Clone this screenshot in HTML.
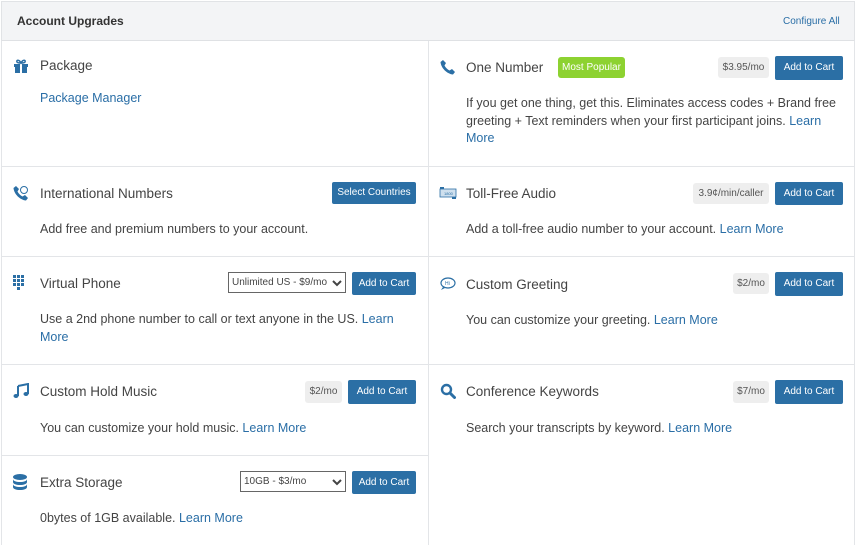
<!DOCTYPE html>
<html><head><meta charset="utf-8"><style>
*{margin:0;padding:0;box-sizing:border-box}
body{width:856px;height:545px;background:#fff;font-family:"Liberation Sans",sans-serif;color:#444;position:relative;overflow:hidden}
.a{position:absolute;white-space:nowrap}
.hd{position:absolute;left:1px;top:1px;width:854px;height:40px;background:#f3f4f6;border:1px solid #e1e3e6;border-bottom:1px solid #dfe1e4}
.ln{position:absolute;background:#e3e5e8}
.t{font-size:13.5px;color:#444;line-height:16px}
.d{font-size:12.5px;line-height:17.5px;color:#444;white-space:normal}
.l{color:#2a6ea6}
.btn{position:absolute;background:#2b6fa5;color:#fff;font-size:10px;border-radius:2px;text-align:center;white-space:nowrap}
.pr{position:absolute;background:#eee;color:#555;font-size:10px;border-radius:3px;text-align:center;white-space:nowrap}
.sel{position:absolute;border:1px solid #666;font-size:10px;line-height:19px;color:#444;padding-left:3px;background:#fff;white-space:nowrap}
.sel svg{position:absolute;right:3px;top:6px}
</style></head><body>
<div class="hd"></div>
<div class="a" style="left:17px;top:14px;font-size:12px;font-weight:bold;color:#333">Account Upgrades</div>
<div class="a l" style="left:783px;top:16px;font-size:10px">Configure All</div>
<div class="ln" style="left:1px;top:41px;width:1px;height:504px"></div>
<div class="ln" style="left:854px;top:41px;width:1px;height:504px"></div>
<div class="ln" style="left:428px;top:41px;width:1px;height:504px"></div>
<div class="ln" style="left:1px;top:166px;width:854px;height:1px"></div>
<div class="ln" style="left:1px;top:256px;width:854px;height:1px"></div>
<div class="ln" style="left:1px;top:364px;width:854px;height:1px"></div>
<div class="ln" style="left:1px;top:455px;width:428px;height:1px"></div>

<svg class="a" style="left:13px;top:59px" width="16" height="14" viewBox="0 0 16 14"><path d="M1 5h14v3H1zM2 8h12v6H2z" fill="#2b6fa5"/><rect x="7" y="4" width="2" height="10" fill="#fff"/><path d="M8 4C6 0 3 1 4 3 4.5 4 7 4 8 4 9 4 11.5 4 12 3 13 1 10 0 8 4z" fill="none" stroke="#2b6fa5" stroke-width="1.5"/></svg>
<div class="a t" style="left:40px;top:58px">Package</div>
<div class="a l" style="left:40px;top:91px;font-size:12.5px">Package Manager</div>

<svg class="a" style="left:440px;top:59px" width="16" height="16" viewBox="0 0 16 16"><path d="M3 1l3 3-1.5 2.5c1 2 3 4 5 5L12 10l3 3-2 2.5C7 15 1 9 .5 3z" fill="#2b6fa5"/></svg>
<div class="a t" style="left:466px;top:60px">One Number</div>
<div class="pr" style="left:558px;top:57px;width:67px;height:21px;line-height:21px;background:#8dd231;color:#fff">Most Popular</div>
<div class="pr" style="left:718px;top:57px;width:51px;height:21px;line-height:21px">$3.95/mo</div>
<div class="btn" style="left:775px;top:56px;width:68px;height:24px;line-height:24px">Add to Cart</div>
<div class="a d" style="left:466px;top:95px;width:378px">If you get one thing, get this. Eliminates access codes + Brand free greeting + Text reminders when your first participant joins. <span class="l">Learn More</span></div>

<svg class="a" style="left:13px;top:185px" width="16" height="16" viewBox="0 0 16 16"><path d="M3 1l3 3-1.5 2.5c1 2 3 4 5 5L12 10l3 3-2 2.5C7 15 1 9 .5 3z" fill="#2b6fa5"/><circle cx="11" cy="5" r="3.5" fill="none" stroke="#2b6fa5"/></svg>
<div class="a t" style="left:40px;top:186px">International Numbers</div>
<div class="btn" style="left:332px;top:182px;width:84px;height:22px;line-height:22px">Select Countries</div>
<div class="a d" style="left:40px;top:221px">Add free and premium numbers to your account.</div>

<svg class="a" style="left:439px;top:185px" width="18" height="16" viewBox="0 0 18 16"><rect x="1" y="4" width="16" height="8" fill="#cfe0ee" stroke="#2b6fa5" stroke-width=".8"/><path d="M1 2h4v2H1zM13 12h4v2h-4z" fill="#2b6fa5"/><text x="5" y="10" font-size="4" fill="#2b6fa5">1800</text></svg>
<div class="a t" style="left:466px;top:186px">Toll-Free Audio</div>
<div class="pr" style="left:693px;top:183px;width:76px;height:21px;line-height:21px">3.9¢/min/caller</div>
<div class="btn" style="left:775px;top:182px;width:68px;height:23px;line-height:23px">Add to Cart</div>
<div class="a d" style="left:466px;top:221px">Add a toll-free audio number to your account. <span class="l">Learn More</span></div>

<svg class="a" style="left:13px;top:275px" width="14" height="16" viewBox="0 0 14 16"><g fill="#2b6fa5"><rect x="0" y="0" width="3" height="3"/><rect x="4" y="0" width="3" height="3"/><rect x="8" y="0" width="3" height="3"/><rect x="0" y="4" width="3" height="3"/><rect x="4" y="4" width="3" height="3"/><rect x="8" y="4" width="3" height="3"/><rect x="0" y="8" width="3" height="3"/><rect x="4" y="8" width="3" height="3"/><rect x="8" y="8" width="3" height="3"/><rect x="4" y="12" width="3" height="3"/></g></svg>
<div class="a t" style="left:40px;top:276px">Virtual Phone</div>
<div class="sel" style="left:228px;top:272px;width:118px;height:21px">Unlimited US - $9/mo<svg width="10" height="8" viewBox="0 0 10 8"><path d="M1 2l4 4 4-4" fill="none" stroke="#444" stroke-width="2"/></svg></div>
<div class="btn" style="left:352px;top:272px;width:64px;height:23px;line-height:23px">Add to Cart</div>
<div class="a d" style="left:40px;top:311px;width:365px">Use a 2nd phone number to call or text anyone in the US. <span class="l">Learn More</span></div>

<svg class="a" style="left:440px;top:277px" width="16" height="14" viewBox="0 0 16 14"><ellipse cx="8" cy="6" rx="7" ry="5" fill="none" stroke="#2b6fa5" stroke-width="1.2"/><path d="M3 10l-2 3 4-2" fill="#2b6fa5"/><text x="5" y="8" font-size="5" fill="#2b6fa5">Hi</text></svg>
<div class="a t" style="left:466px;top:277px">Custom Greeting</div>
<div class="pr" style="left:733px;top:273px;width:36px;height:21px;line-height:21px">$2/mo</div>
<div class="btn" style="left:775px;top:272px;width:68px;height:24px;line-height:24px">Add to Cart</div>
<div class="a d" style="left:466px;top:312px">You can customize your greeting. <span class="l">Learn More</span></div>

<svg class="a" style="left:13px;top:383px" width="16" height="16" viewBox="0 0 16 16"><path d="M5 3l10-2v10" fill="none" stroke="#2b6fa5" stroke-width="2"/><path d="M5 3v10" stroke="#2b6fa5" stroke-width="2"/><ellipse cx="3" cy="13" rx="2.5" ry="2" fill="#2b6fa5"/><ellipse cx="13" cy="11" rx="2.5" ry="2" fill="#2b6fa5"/></svg>
<div class="a t" style="left:40px;top:384px">Custom Hold Music</div>
<div class="pr" style="left:305px;top:381px;width:37px;height:22px;line-height:22px">$2/mo</div>
<div class="btn" style="left:348px;top:380px;width:68px;height:24px;line-height:24px">Add to Cart</div>
<div class="a d" style="left:40px;top:420px">You can customize your hold music. <span class="l">Learn More</span></div>

<svg class="a" style="left:440px;top:383px" width="16" height="16" viewBox="0 0 16 16"><circle cx="6.5" cy="6.5" r="4.5" fill="none" stroke="#2b6fa5" stroke-width="2.4"/><path d="M10 10l4.5 4.5" stroke="#2b6fa5" stroke-width="3" stroke-linecap="round"/></svg>
<div class="a t" style="left:466px;top:384px">Conference Keywords</div>
<div class="pr" style="left:733px;top:381px;width:36px;height:22px;line-height:22px">$7/mo</div>
<div class="btn" style="left:775px;top:380px;width:68px;height:24px;line-height:24px">Add to Cart</div>
<div class="a d" style="left:466px;top:420px">Search your transcripts by keyword. <span class="l">Learn More</span></div>

<svg class="a" style="left:13px;top:474px" width="14" height="17" viewBox="0 0 14 17"><g fill="#2b6fa5"><ellipse cx="7" cy="3" rx="7" ry="3"/><path d="M0 5c0 4 14 4 14 0v3c0 4-14 4-14 0z"/><path d="M0 10c0 4 14 4 14 0v3c0 4-14 4-14 0z"/></g></svg>
<div class="a t" style="left:40px;top:475px">Extra Storage</div>
<div class="sel" style="left:240px;top:471px;width:106px;height:21px">10GB - $3/mo<svg width="10" height="8" viewBox="0 0 10 8"><path d="M1 2l4 4 4-4" fill="none" stroke="#444" stroke-width="2"/></svg></div>
<div class="btn" style="left:352px;top:471px;width:64px;height:23px;line-height:23px">Add to Cart</div>
<div class="a d" style="left:40px;top:510px">0bytes of 1GB available. <span class="l">Learn More</span></div>
</body></html>
